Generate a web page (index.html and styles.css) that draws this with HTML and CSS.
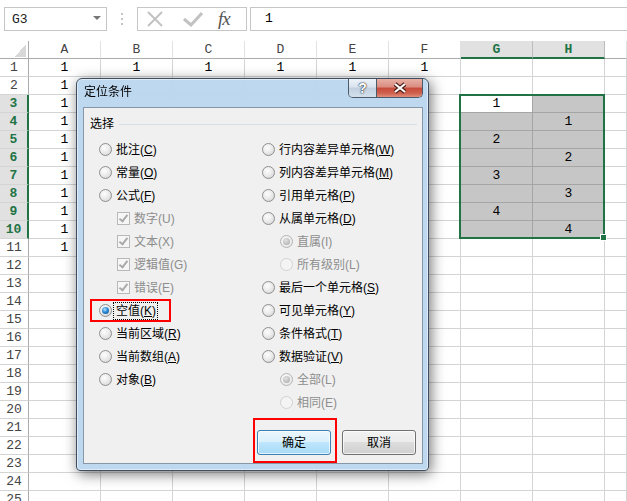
FILE: index.html
```html
<!DOCTYPE html>
<html lang="zh-CN">
<head>
    <meta charset="UTF-8">
    <title>定位条件</title>
    <link rel="stylesheet" href="styles.css">
</head>
<body>
<div id="excel">
    <div id="formula-bar">
        <div class="name-box">G3<span class="drop"></span></div>
        <div class="grip"><i></i><i></i><i></i></div>
        <div class="fx-buttons">
            <svg class="ico-cancel" width="16" height="16" viewBox="0 0 16 16"><path d="M1 1 L15 15 M15 1 L1 15" stroke="#c2c2c2" stroke-width="2" fill="none"/></svg>
            <svg class="ico-enter" width="20" height="16" viewBox="0 0 20 16"><path d="M1 8 L8 14 L19 2" stroke="#c2c2c2" stroke-width="3" fill="none"/></svg>
            <span class="fx">fx</span>
        </div>
        <div class="formula-input">1</div>
    </div>

    <div id="sheet">
        <div class="row head"><b class="corner"></b><span>A</span><span>B</span><span>C</span><span>D</span><span>E</span><span>F</span><span class="on">G</span><span class="on">H</span><span></span></div>
        <div class="row"><b>1</b><span>1</span><span>1</span><span>1</span><span>1</span><span>1</span><span>1</span><span></span><span></span><span></span></div>
        <div class="row"><b>2</b><span>1</span><span></span><span></span><span></span><span></span><span></span><span></span><span></span><span></span></div>
        <div class="row"><b class="on">3</b><span>1</span><span></span><span></span><span></span><span></span><span></span><span class="a">1</span><span class="s"></span><span></span></div>
        <div class="row"><b class="on">4</b><span>1</span><span></span><span></span><span></span><span></span><span></span><span class="s"></span><span class="s">1</span><span></span></div>
        <div class="row"><b class="on">5</b><span>1</span><span></span><span></span><span></span><span></span><span></span><span class="s">2</span><span class="s"></span><span></span></div>
        <div class="row"><b class="on">6</b><span>1</span><span></span><span></span><span></span><span></span><span></span><span class="s"></span><span class="s">2</span><span></span></div>
        <div class="row"><b class="on">7</b><span>1</span><span></span><span></span><span></span><span></span><span></span><span class="s">3</span><span class="s"></span><span></span></div>
        <div class="row"><b class="on">8</b><span>1</span><span></span><span></span><span></span><span></span><span></span><span class="s"></span><span class="s">3</span><span></span></div>
        <div class="row"><b class="on">9</b><span>1</span><span></span><span></span><span></span><span></span><span></span><span class="s">4</span><span class="s"></span><span></span></div>
        <div class="row"><b class="on">10</b><span>1</span><span></span><span></span><span></span><span></span><span></span><span class="s"></span><span class="s">4</span><span></span></div>
        <div class="row"><b>11</b><span>1</span><span></span><span></span><span></span><span></span><span></span><span></span><span></span><span></span></div>
        <div class="row"><b>12</b><span></span><span></span><span></span><span></span><span></span><span></span><span></span><span></span><span></span></div>
        <div class="row"><b>13</b><span></span><span></span><span></span><span></span><span></span><span></span><span></span><span></span><span></span></div>
        <div class="row"><b>14</b><span></span><span></span><span></span><span></span><span></span><span></span><span></span><span></span><span></span></div>
        <div class="row"><b>15</b><span></span><span></span><span></span><span></span><span></span><span></span><span></span><span></span><span></span></div>
        <div class="row"><b>16</b><span></span><span></span><span></span><span></span><span></span><span></span><span></span><span></span><span></span></div>
        <div class="row"><b>17</b><span></span><span></span><span></span><span></span><span></span><span></span><span></span><span></span><span></span></div>
        <div class="row"><b>18</b><span></span><span></span><span></span><span></span><span></span><span></span><span></span><span></span><span></span></div>
        <div class="row"><b>19</b><span></span><span></span><span></span><span></span><span></span><span></span><span></span><span></span><span></span></div>
        <div class="row"><b>20</b><span></span><span></span><span></span><span></span><span></span><span></span><span></span><span></span><span></span></div>
        <div class="row"><b>21</b><span></span><span></span><span></span><span></span><span></span><span></span><span></span><span></span><span></span></div>
        <div class="row"><b>22</b><span></span><span></span><span></span><span></span><span></span><span></span><span></span><span></span><span></span></div>
        <div class="row"><b>23</b><span></span><span></span><span></span><span></span><span></span><span></span><span></span><span></span><span></span></div>
        <div class="row"><b>24</b><span></span><span></span><span></span><span></span><span></span><span></span><span></span><span></span><span></span></div>
        <div class="row"><b>25</b><span></span><span></span><span></span><span></span><span></span><span></span><span></span><span></span><span></span></div>
    </div>

    <!-- selected range G3:H10 -->
    <div class="selection"><i class="handle"></i></div>

    <div id="goto-dialog">
        <div class="title-bar">
            <span class="title">定位条件</span>
            <div class="caption">
                <span class="help-btn">?</span>
                <span class="close-btn">
                    <svg width="16" height="12" viewBox="0 0 16 12"><path d="M3 2 L13 10 M13 2 L3 10" stroke="#4a1c16" stroke-width="4.2" fill="none"/><path d="M3 2 L13 10 M13 2 L3 10" stroke="#fff" stroke-width="2.2" fill="none"/></svg>
                </span>
            </div>
        </div>
        <div class="panel">
            <div class="group-label">选择</div>
            <div class="options">
                <div class="col">
                    <div class="opt"><i class="radio"></i>批注(<u>C</u>)</div>
                    <div class="opt"><i class="radio"></i>常量(<u>O</u>)</div>
                    <div class="opt"><i class="radio"></i>公式(<u>F</u>)</div>
                    <div class="opt sub off"><i class="check"></i>数字(U)</div>
                    <div class="opt sub off"><i class="check"></i>文本(X)</div>
                    <div class="opt sub off"><i class="check"></i>逻辑值(G)</div>
                    <div class="opt sub off"><i class="check"></i>错误(E)</div>
                    <div class="opt"><i class="radio on"></i><span class="focus">空值(<u>K</u>)</span></div>
                    <div class="opt"><i class="radio"></i>当前区域(<u>R</u>)</div>
                    <div class="opt"><i class="radio"></i>当前数组(<u>A</u>)</div>
                    <div class="opt"><i class="radio"></i>对象(<u>B</u>)</div>
                </div>
                <div class="col">
                    <div class="opt"><i class="radio"></i>行内容差异单元格(<u>W</u>)</div>
                    <div class="opt"><i class="radio"></i>列内容差异单元格(<u>M</u>)</div>
                    <div class="opt"><i class="radio"></i>引用单元格(<u>P</u>)</div>
                    <div class="opt"><i class="radio"></i>从属单元格(<u>D</u>)</div>
                    <div class="opt sub off"><i class="radio on"></i>直属(I)</div>
                    <div class="opt sub off faint"><i class="radio"></i>所有级别(L)</div>
                    <div class="opt"><i class="radio"></i>最后一个单元格(<u>S</u>)</div>
                    <div class="opt"><i class="radio"></i>可见单元格(<u>Y</u>)</div>
                    <div class="opt"><i class="radio"></i>条件格式(<u>T</u>)</div>
                    <div class="opt"><i class="radio"></i>数据验证(<u>V</u>)</div>
                    <div class="opt sub off"><i class="radio on"></i>全部(L)</div>
                    <div class="opt sub off faint"><i class="radio"></i>相同(E)</div>
                </div>
            </div>
            <div class="buttons">
                <button class="btn default">确定</button>
                <button class="btn">取消</button>
            </div>

            <!-- red annotation boxes -->
            <div class="mark mark-blank"></div>
            <div class="mark mark-ok"></div>
        </div>
    </div>
</div>
</body>
</html>
```

FILE: styles.css
```css
html, body {
    margin: 0;
    padding: 0;
    background: #fff;
}

body {
    font-family: "Liberation Sans", "Noto Sans CJK SC", sans-serif;
    font-size: 12px;
}

#excel {
    position: relative;
    width: 627px;
    height: 501px;
    overflow: hidden;
    background: #fff;
}

/* formula bar */
#formula-bar {
    display: flex;
    align-items: flex-start;
    height: 41px;
    padding-top: 7px;
    box-sizing: border-box;
}

.name-box {
    margin-left: 4px;
    width: 103px;
    height: 24px;
    box-sizing: border-box;
    border: 1px solid #c6c6c6;
    display: flex;
    align-items: center;
    padding-left: 7px;
    font: 13px "Liberation Mono", monospace;
    color: #222;
}

.name-box .drop {
    margin-left: auto;
    margin-right: 5px;
    margin-top: -3px;
    border-left: 4px solid transparent;
    border-right: 4px solid transparent;
    border-top: 4px solid #777;
}

.grip {
    margin-left: 14px;
    margin-top: 6px;
    display: flex;
    flex-direction: column;
    gap: 3px;
}

.grip i {
    width: 2px;
    height: 2px;
    background: #c4c4c4;
}

.fx-buttons {
    margin-left: 14px;
    width: 110px;
    height: 24px;
    box-sizing: border-box;
    border: 1px solid #c6c6c6;
    display: flex;
    align-items: center;
    padding-left: 9px;
}

.ico-enter {
    margin-left: 20px;
}

.fx {
    margin-left: 15px;
    font: italic 19px/20px "Liberation Serif", serif;
    color: #555;
    letter-spacing: -1px;
}

.formula-input {
    flex: 1;
    margin-left: 3px;
    height: 24px;
    box-sizing: border-box;
    border: 1px solid #c6c6c6;
    border-right: none;
    padding-left: 14px;
    font: 13px/22px "Liberation Mono", monospace;
}

/* sheet grid */
.row {
    display: grid;
    grid-template-columns: 29px repeat(8, 72px) 1fr;
    height: 18px;
}

.row > * {
    box-sizing: border-box;
    border-right: 1px solid #d4d4d4;
    border-bottom: 1px solid #d4d4d4;
    text-align: center;
    font: 13px/17px "Liberation Mono", monospace;
    color: #000;
    overflow: hidden;
}

.row > b {
    color: #444;
    border-right-color: #ababab;
}

.row > b.on {
    background: #e1e1e1;
    color: #217346;
    font-weight: bold;
    border-right: 2px solid #217346;
}

.row.head > * {
    color: #444;
    border-right-color: #e2e2e2;
    border-bottom-color: #ababab;
}

.row.head > .corner {
    border-right-color: #ababab;
    background: linear-gradient(to bottom right, transparent 50%, #d8d8d8 50%) no-repeat;
    background-size: 11px 13px;
    background-position: right 2px bottom 1px;
}

.row.head > .on {
    background: #e1e1e1;
    color: #217346;
    font-weight: bold;
    border-right-color: #bcbcbc;
    border-bottom: 2px solid #217346;
}

.row > .s {
    background: #c6c6c6;
    border-color: #a5a5a5;
}

.row > .a {
    border-color: #a5a5a5;
}

.selection {
    position: absolute;
    left: 459px;
    top: 94px;
    width: 146px;
    height: 145px;
    box-sizing: border-box;
    border: 2px solid #217346;
}

.selection .handle {
    position: absolute;
    right: -4px;
    bottom: -4px;
    width: 5px;
    height: 5px;
    background: #217346;
    border: 1px solid #fff;
}

/* dialog */
#goto-dialog {
    position: absolute;
    left: 76px;
    top: 78px;
    width: 353px;
    height: 393px;
    box-sizing: border-box;
    border: 1px solid #3d4e60;
    border-radius: 6px 6px 4px 4px;
    background: rgba(176, 207, 236, 0.82);
    backdrop-filter: blur(3px);
    box-shadow: 2px 3px 14px rgba(0, 0, 0, 0.55), inset 0 0 0 1px rgba(255, 255, 255, 0.5);
    padding: 0 5px 6px 6px;
    display: flex;
    flex-direction: column;
}

.title-bar {
    height: 28px;
    display: flex;
    align-items: flex-start;
    flex: none;
}

.title {
    margin: 5px 0 0 1px;
    font-size: 12px;
    line-height: 16px;
    color: #000;
}

.caption {
    margin-left: auto;
    display: flex;
    height: 19px;
    box-sizing: border-box;
    border: 1px solid #4b5b6b;
    border-top: none;
    border-radius: 0 0 5px 5px;
    overflow: hidden;
}

.help-btn {
    width: 27px;
    border-right: 1px solid #4b5b6b;
    background: linear-gradient(#eef3f9, #d9e3ee 45%, #c1cfdf 50%, #d3e0ec);
    color: #fff;
    font: bold 14px/18px "Liberation Sans", sans-serif;
    text-align: center;
    text-shadow: 0 0 2px #1c2633, 0 0 1px #000;
}

.close-btn {
    width: 45px;
    display: flex;
    align-items: center;
    justify-content: center;
    background: linear-gradient(#e9b0a5, #d98c80 45%, #c8493a 50%, #cf6250 80%, #e38f7c);
}

.panel {
    flex: 1;
    position: relative;
    background: #f0f0f0;
    border: 1px solid #8597a8;
    box-sizing: border-box;
}

.group-label {
    display: flex;
    align-items: center;
    height: 16px;
    margin: 8px 5px 0 6px;
    line-height: 16px;
}

.group-label::after {
    content: "";
    flex: 1;
    height: 1px;
    margin-left: 5px;
    background: #d5dfe5;
}

.options {
    display: grid;
    grid-template-columns: 163px 1fr;
    margin-top: 6px;
    padding-left: 15px;
}

.opt {
    display: flex;
    align-items: center;
    height: 23px;
    white-space: nowrap;
    line-height: 14px;
    color: #000;
}

.opt.sub {
    padding-left: 18px;
}

.opt.off {
    color: #8d8d8d;
}

.radio {
    position: relative;
    flex: none;
    width: 13px;
    height: 13px;
    box-sizing: border-box;
    margin-right: 4px;
    border-radius: 50%;
    border: 1px solid #8e8f8f;
    background: radial-gradient(circle at 40% 35%, #fdfdfd 0, #ececec 45%, #cdcdcd 100%);
}

.radio.on::after {
    content: "";
    position: absolute;
    left: 2px;
    top: 2px;
    width: 7px;
    height: 7px;
    border-radius: 50%;
    background: radial-gradient(circle at 40% 35%, #b0e4ff, #2d8ad6 45%, #0b4780);
}

.off .radio {
    border-color: #b4b4b4;
    background: radial-gradient(circle at 40% 35%, #fafafa, #e4e4e4);
}

.off .radio.on::after {
    background: radial-gradient(circle at 40% 35%, #e2e2e2, #a6a6a6);
}

.faint .radio {
    border-color: #d2d2d2;
    background: #f4f4f4;
}

.check {
    position: relative;
    flex: none;
    width: 13px;
    height: 13px;
    box-sizing: border-box;
    margin-right: 4px;
    border: 1px solid #b8b8b8;
    background: #f6f6f6;
}

.check::after {
    content: "";
    position: absolute;
    left: 3px;
    top: 0;
    width: 3px;
    height: 7px;
    border: solid #aaa;
    border-width: 0 2px 2px 0;
    transform: rotate(38deg);
}

.focus {
    margin-left: -3px;
    padding: 1px 1px 1px 2px;
    border: 1px dotted #000;
}

.buttons {
    display: flex;
    justify-content: flex-end;
    gap: 11px;
    margin-top: 16px;
    padding-right: 6px;
}

.btn {
    width: 74px;
    height: 25px;
    box-sizing: border-box;
    padding: 0;
    border: 1px solid #707070;
    border-radius: 3px;
    font: 12px/1 "Liberation Sans", "Noto Sans CJK SC", sans-serif;
    color: #000;
    background: linear-gradient(#f2f2f2 0, #ebebeb 49%, #dddddd 50%, #cfcfcf 100%);
    box-shadow: inset 0 0 0 1px rgba(255, 255, 255, 0.7);
}

.btn.default {
    border-color: #3c7fb1;
    background: linear-gradient(#eaf6fd 0, #d9f0fc 49%, #bee6fd 50%, #a7d9f5 100%);
}

.mark {
    position: absolute;
    box-sizing: border-box;
    border: 2px solid #f00;
}

.mark-blank {
    left: 6px;
    top: 191px;
    width: 81px;
    height: 23px;
}

.mark-ok {
    left: 169px;
    top: 310px;
    width: 84px;
    height: 45px;
}
```
